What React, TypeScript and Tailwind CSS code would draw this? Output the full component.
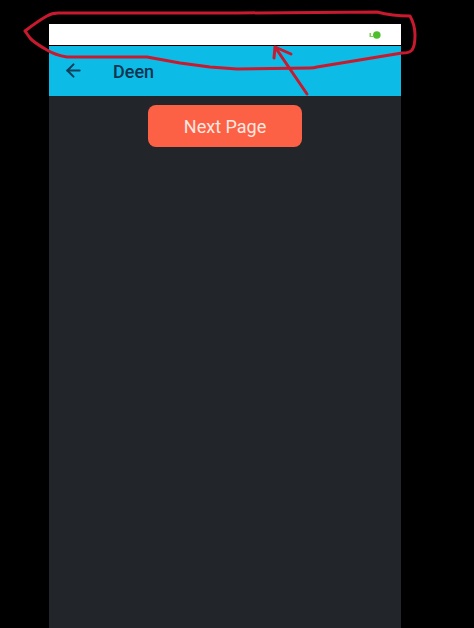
import { ArrowLeft } from "lucide-react";

export default function App() {
  return (
    <div className="relative h-[628px] w-[474px] overflow-hidden bg-black font-['Roboto',sans-serif]">
      <div className="ml-[49px] flex h-full w-[352px] flex-col pt-6">
        {/* status bar */}
        <div className="flex h-[21px] items-center justify-end bg-white pr-[20px]">
          <svg width="12" height="8" viewBox="0 0 12 8">
            <rect x="0.5" y="2" width="1.5" height="4" fill="#7fd050" />
            <rect x="2" y="5" width="2" height="1" fill="#7fd050" />
            <circle cx="7.8" cy="4" r="3.8" fill="#4fc02c" />
          </svg>
        </div>

        {/* header */}
        <div className="mt-px flex h-[50px] items-center bg-[#0cbce6] pb-px pl-[14px]">
          <ArrowLeft className="h-[21px] w-[21px] text-[#0f3d5c]" strokeWidth={2.4} />
          <span className="ml-[29px] mt-[2px] text-[18px] font-medium text-[#11334f]">Deen</span>
        </div>

        {/* body */}
        <div className="flex flex-1 justify-center bg-[#22252a] pt-[9px]">
          <button className="flex h-[42px] w-[154px] items-center justify-center rounded-lg bg-[#fd6145] pt-px text-lg text-[#fde8e0]">
            Next Page
          </button>
        </div>
      </div>

      {/* red marker scribble on top of the screenshot */}
      <svg className="pointer-events-none absolute left-0 top-0" width="474" height="628" viewBox="0 0 474 628" fill="none">
        <path
          d="M25 31 Q38 21 47 16 Q52 13 58 13 L237 13 L377 12 Q392 16 410 16 Q415 25 415 35 Q415 46 412 50 Q410 53 402 53 L317 67 Q314 68 310 68 L237 69 L210 67 L180 63 L147 57 L67 57 Q55 55 47 50 Q33 42 30 38 Z"
          stroke="#c8192f"
          strokeWidth="3"
          strokeLinejoin="round"
        />
        <path
          d="M307 94 L275 47 M274 58 L275 47 L291 54"
          stroke="#c8192f"
          strokeWidth="3"
          strokeLinecap="round"
          strokeLinejoin="round"
        />
      </svg>
    </div>
  );
}
